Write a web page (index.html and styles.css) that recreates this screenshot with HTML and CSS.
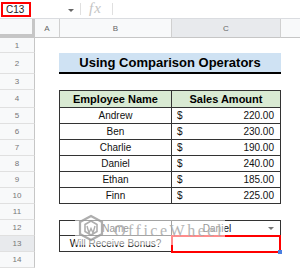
FILE: index.html
```html
<!DOCTYPE html>
<html>
<head>
<meta charset="utf-8">
<link rel="stylesheet" href="styles.css">
</head>
<body>
<div class="page">
  <div class="topbar">
    <div class="namebox">C13</div>
    <div class="nb-arrow"></div>
    <div class="vsep"></div>
    <div class="fx">fx</div>
    <div class="vsep vsep2"></div>
  </div>
  <div class="sheet">
    <div class="hdr">
      <div class="corner"></div>
      <div class="ch ca">A</div>
      <div class="ch cb">B</div>
      <div class="ch cc sel">C</div>
      <div class="ch cd"></div>
    </div>

    <div class="row h15"><div class="rh">1</div><div class="a"></div><div class="b"></div><div class="c"></div><div class="d"></div></div>
    <div class="row h21"><div class="rh">2</div><div class="a"></div><div class="title">Using Comparison Operators</div><div class="d"></div></div>
    <div class="row h16"><div class="rh">3</div><div class="a"></div><div class="b"></div><div class="c"></div><div class="d"></div></div>
    <div class="row h18 first"><div class="rh">4</div><div class="a"></div><div class="b t th">Employee Name</div><div class="c t th">Sales Amount</div><div class="d"></div></div>
    <div class="row h16"><div class="rh">5</div><div class="a"></div><div class="b t">Andrew</div><div class="c t money"><span>$</span><span>220.00</span></div><div class="d"></div></div>
    <div class="row h16"><div class="rh">6</div><div class="a"></div><div class="b t">Ben</div><div class="c t money"><span>$</span><span>230.00</span></div><div class="d"></div></div>
    <div class="row h16"><div class="rh">7</div><div class="a"></div><div class="b t">Charlie</div><div class="c t money"><span>$</span><span>190.00</span></div><div class="d"></div></div>
    <div class="row h16"><div class="rh">8</div><div class="a"></div><div class="b t">Daniel</div><div class="c t money"><span>$</span><span>240.00</span></div><div class="d"></div></div>
    <div class="row h16"><div class="rh">9</div><div class="a"></div><div class="b t">Ethan</div><div class="c t money"><span>$</span><span>185.00</span></div><div class="d"></div></div>
    <div class="row h16"><div class="rh">10</div><div class="a"></div><div class="b t">Finn</div><div class="c t money"><span>$</span><span>225.00</span></div><div class="d"></div></div>
    <div class="row h16"><div class="rh">11</div><div class="a"></div><div class="b"></div><div class="c"></div><div class="d"></div></div>
    <div class="row h16 first"><div class="rh">12</div><div class="a"></div><div class="b t">Name</div><div class="c t dropdown"><span class="ddtext">Daniel</span><span class="ddarrow"></span></div><div class="d"></div></div>
    <div class="row h16"><div class="rh selrow">13</div><div class="a"></div><div class="b t">Will Receive Bonus?</div><div class="c t active"><div class="selbox"></div><div class="handle"></div></div><div class="d"></div></div>
    <div class="row h16"><div class="rh">14</div><div class="a"></div><div class="b"></div><div class="c"></div><div class="d"></div></div>
  </div>

  <div class="watermark">
    <svg class="wm-logo" width="26" height="28" viewBox="0 0 26 28">
      <path d="M13 2 L24 8 L24 20 L13 26 L2 20 L2 8 Z" fill="none" stroke="#9a9a9a" stroke-width="2.2"/>
      <path d="M13 7 L19 10.5 L19 17.5 L13 21 L7 17.5 L7 10.5 Z" fill="none" stroke="#9a9a9a" stroke-width="1.6"/>
      <path d="M9 12 L11 19 L13 14.5 L15 19 L17 12" fill="none" stroke="#9a9a9a" stroke-width="1.4"/>
    </svg>
    <span class="wm-text">OfficeWheel</span>
  </div>
</div>
</body>
</html>
```

FILE: styles.css
```css
* { box-sizing: border-box; }
html, body { margin: 0; padding: 0; background: #fff; }
body { font-family: "Liberation Sans", Arial, sans-serif; width: 300px; height: 269px; overflow: hidden; }
.page { position: relative; width: 300px; height: 269px; overflow: hidden; }

.topbar {
  height: 19px;
  border-bottom: 1px solid #dadce0;
  display: flex;
  align-items: flex-start;
  padding: 2px 0 0 1px;
}
.namebox {
  width: 30px; height: 15px;
  border: 2px solid #ff0000;
  font-size: 10px; line-height: 11px;
  padding-left: 3px;
  color: #222;
}
.nb-arrow {
  margin: 7px 0 0 37px;
  width: 0; height: 0;
  border-left: 3px solid transparent;
  border-right: 3px solid transparent;
  border-top: 3px solid #666;
}
.vsep { width: 1px; height: 12px; margin: 1px 0 0 6px; background: #e0e0e0; }
.vsep2 { margin-left: 10px; }
.fx {
  margin-left: 8px;
  font-family: "Liberation Serif", serif;
  font-style: italic;
  font-size: 15px; line-height: 13px;
  letter-spacing: 1px;
  color: #c4c4c4;
}

.sheet { display: flex; flex-direction: column; }
.hdr { display: flex; height: 19px; }
.corner { width: 35px; background: #f8f9fa; border-right: 3px solid #c6c6c6; border-bottom: 4px solid #c6c6c6; }
.ch {
  background: #f8f9fa;
  border-right: 1px solid #d0d0d0;
  border-bottom: 1px solid #c6c6c6;
  font-size: 8px; color: #666;
  display: flex; align-items: center; justify-content: center;
}
.ca { width: 25px; }
.cb { width: 112px; }
.cc { width: 109px; }
.cd { flex: 1; border-right: none; }
.ch.sel { background: #e8eaed; }

.row { display: flex; }
.h15 { height: 15px; }
.h16 { height: 16px; }
.h18 { height: 18px; }
.h21 { height: 21px; }
.rh {
  width: 35px;
  background: #f8f9fa;
  border-right: 1px solid #c6c6c6;
  border-bottom: 1px solid #e0e0e0;
  font-size: 8px; color: #777;
  display: flex; align-items: center; justify-content: center;
}
.rh.selrow { background: #e8eaed; }
.a { width: 24px; }
.b { width: 112px; }
.c { width: 110px; }
.d { flex: 1; }

.title {
  width: 222px;
  background: #cfe2f3;
  border-bottom: 2px solid #000;
  font-weight: bold; font-size: 13px; color: #000;
  display: flex; align-items: center; justify-content: center;
}

.t {
  border-left: 1px solid #333;
  border-bottom: 1px solid #333;
  font-size: 10px; color: #111;
  display: flex; align-items: center; justify-content: center;
}
.c.t { border-right: 1px solid #333; }
.first .t { border-top: 1px solid #333; }
.th { background: #d9ead3; font-weight: bold; font-size: 11px; color: #000; }
.money { justify-content: space-between; padding: 0 6px 0 5px; }

.dropdown { justify-content: flex-start; padding: 0; }
.ddtext { flex: 1; text-align: center; }
.ddarrow {
  margin: 0 6px 0 6px;
  width: 0; height: 0;
  border-left: 3px solid transparent;
  border-right: 3px solid transparent;
  border-top: 3px solid #777;
}

.active { position: relative; }
.selbox {
  position: absolute;
  left: -1px; top: -1px; right: -1px; bottom: -2px;
  border: 2px solid #ff0000;
}
.handle {
  position: absolute;
  right: -2px; bottom: -3px;
  width: 4px; height: 4px;
  background: #4a7fe0;
}

.watermark {
  position: absolute;
  left: 75px; top: 211px;
  width: 150px; height: 34px;
  background: rgba(255,255,255,0.55);
  display: flex; align-items: center;
  padding-left: 3px;
}
.wm-logo { opacity: 0.8; }
.wm-text {
  margin-left: 10px;
  margin-top: 6px;
  font-family: "Liberation Serif", serif;
  font-size: 16px;
  letter-spacing: 2.5px;
  color: #a8a8a8;
  opacity: 0.85;
}
```
